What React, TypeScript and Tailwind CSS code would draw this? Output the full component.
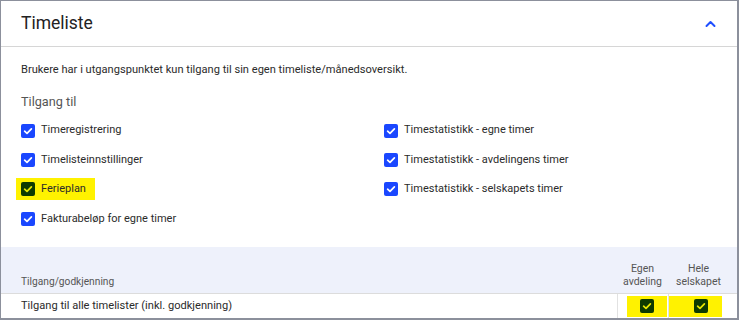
import React from "react";

const font = { fontFamily: "Roboto, 'Noto Sans', sans-serif" };

function Box({ hl = false }: { hl?: boolean }) {
  return (
    <span
      className={`inline-flex h-[14px] w-[14px] shrink-0 items-center justify-center rounded-[2px] ${hl ? "bg-[#0d3a00]" : "bg-[#1a47ff]"}`}
    >
      <svg width="14" height="14" viewBox="0 0 14 14" fill="none">
        <path
          d="M3.6 7.2 L6 9.4 L10.4 4.8"
          stroke={hl ? "#e8e800" : "#ffffff"}
          strokeWidth="1.7"
          strokeLinecap="round"
          strokeLinejoin="round"
        />
      </svg>
    </span>
  );
}

function Item({ label, hl = false }: { label: string; hl?: boolean }) {
  return (
    <div className="flex h-[29.4px] items-center">
      <div className={`flex h-[22px] items-center gap-[6px] ${hl ? "-ml-[5px] w-[79px] bg-[#fff200] pl-[5px]" : ""}`}>
        <Box hl={hl} />
        <span className="text-[11px] text-[#2b2b2b]">{label}</span>
      </div>
    </div>
  );
}

export default function App() {
  return (
    <div className="h-[320px] w-[739px] bg-white" style={font}>
      <div className="flex h-[320px] flex-col overflow-hidden border-b-2 border-l border-r-2 border-t border-[#8c909c]">
        <div className="flex h-[46px] shrink-0 items-center justify-between border-b border-[#d6d6d6] pl-[20px] pr-[21px]">
          <span className="text-[17.5px] text-[#222]">Timeliste</span>
          <svg width="11" height="8" viewBox="0 0 11 8" fill="none">
            <path d="M1.5 6 L5.5 2 L9.5 6" stroke="#1f4fff" strokeWidth="2" strokeLinecap="round" strokeLinejoin="round" />
          </svg>
        </div>
        <div className="px-[20px] pt-[14px]">
          <p className="h-[18px] text-[11.1px] leading-[18px] text-[#2b2b2b]">
            Brukere har i utgangspunktet kun tilgang til sin egen timeliste/månedsoversikt.
          </p>
          <p className="mt-[13px] h-[20px] text-[12.7px] leading-[20px] text-[#555]">Tilgang til</p>
          <div className="mt-[4px] grid grid-cols-[363px_1fr]">
            <div className="flex flex-col">
              <Item label="Timeregistrering" />
              <Item label="Timelisteinnstillinger" />
              <Item label="Ferieplan" hl />
              <Item label="Fakturabeløp for egne timer" />
            </div>
            <div className="flex flex-col">
              <Item label="Timestatistikk - egne timer" />
              <Item label="Timestatistikk - avdelingens timer" />
              <Item label="Timestatistikk - selskapets timer" />
            </div>
          </div>
        </div>
        <div className="mt-[13px] flex h-[46px] shrink-0 items-end bg-[#eef1fb] pb-[5px]">
          <div className="flex-1 pl-[20px] text-[10.2px] leading-[13px] text-[#555]">Tilgang/godkjenning</div>
          <div className="w-[51px] text-center text-[10.5px] leading-[13px] text-[#555]">
            Egen
            <br />
            avdeling
          </div>
          <div className="w-[69px] pr-[8px] text-center text-[10.5px] leading-[13px] text-[#555]">
            Hele
            <br />
            selskapet
          </div>
        </div>
        <div className="flex h-[26px] shrink-0 border-t border-[#dcdcdc]">
          <div className="flex flex-1 items-center pl-[20px] text-[11.1px] text-[#2b2b2b]">
            Tilgang til alle timelister (inkl. godkjenning)
          </div>
          <div className="flex w-[51px] items-center border-l border-[#e2e2e2] pl-[9px]">
            <div className="flex h-[21px] w-[40px] items-center justify-center bg-[#fff200]">
              <Box hl />
            </div>
          </div>
          <div className="flex w-[69px] items-center border-l border-[#e2e2e2]">
            <div className="flex h-[21px] w-[53px] items-center bg-[#fff200] pl-[25px]">
              <Box hl />
            </div>
          </div>
        </div>
      </div>
    </div>
  );
}
